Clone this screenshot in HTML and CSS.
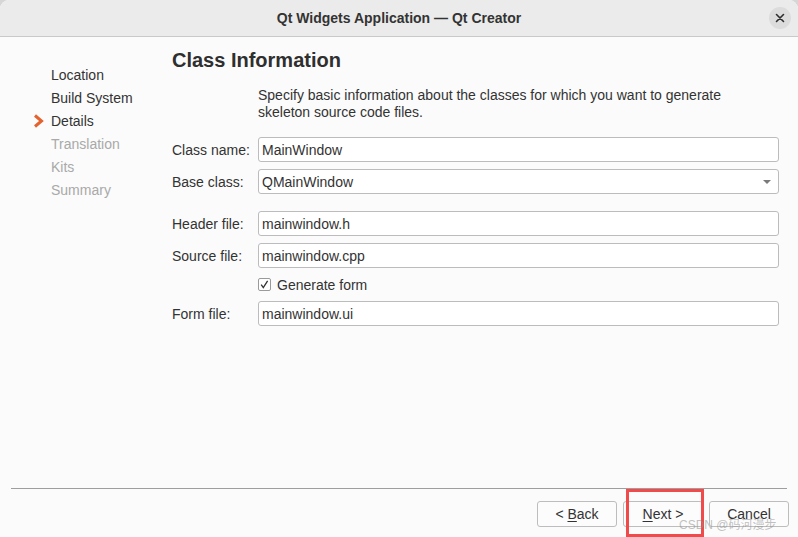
FILE: index.html
```html
<!DOCTYPE html>
<html lang="en">
<head>
    <meta charset="UTF-8">
    <title>Qt Widgets Application — Qt Creator</title>
    <link rel="stylesheet" href="styles.css">
</head>
<body>
    <div class="window">
        <div class="titlebar">
            <span class="title">Qt Widgets Application — Qt Creator</span>
            <div class="close-btn">
                <svg width="10" height="10" viewBox="0 0 10 10">
                    <path d="M1.5 1.5 L8.5 8.5 M8.5 1.5 L1.5 8.5" stroke="#2e2e2e" stroke-width="1.6" stroke-linecap="round"/>
                </svg>
            </div>
        </div>

        <div class="main">
            <div class="sidebar">
                <div class="step">Location</div>
                <div class="step">Build System</div>
                <div class="step current">
                    <svg class="arrow" width="11" height="14" viewBox="0 0 11 14">
                        <path d="M2 1.5 L8.5 7 L2 12.5" fill="none" stroke="#e4622d" stroke-width="3" stroke-linejoin="miter"/>
                    </svg>
                    Details
                </div>
                <div class="step disabled">Translation</div>
                <div class="step disabled">Kits</div>
                <div class="step disabled">Summary</div>
            </div>

            <div class="content">
                <h1 class="page-title">Class Information</h1>
                <p class="description">Specify basic information about the classes for which you want to generate skeleton source code files.</p>

                <div class="form">
                    <div class="row">
                        <label>Class name:</label>
                        <div class="field">MainWindow</div>
                    </div>
                    <div class="row">
                        <label>Base class:</label>
                        <div class="field combo">
                            QMainWindow
                            <span class="combo-arrow"></span>
                        </div>
                    </div>
                    <div class="row spaced">
                        <label>Header file:</label>
                        <div class="field">mainwindow.h</div>
                    </div>
                    <div class="row">
                        <label>Source file:</label>
                        <div class="field">mainwindow.cpp</div>
                    </div>
                    <div class="row check-row">
                        <label></label>
                        <div class="checkbox">
                            <span class="box">
                                <svg width="11" height="11" viewBox="0 0 11 11">
                                    <path d="M2.2 5.6 L4.3 8.6 L8.6 1.8" fill="none" stroke="#333" stroke-width="1.3"/>
                                </svg>
                            </span>
                            Generate form
                        </div>
                    </div>
                    <div class="row">
                        <label>Form file:</label>
                        <div class="field">mainwindow.ui</div>
                    </div>
                </div>
            </div>
        </div>

        <div class="footer">
            <div class="buttons">
                <div class="button"><span>&lt; <u>B</u>ack</span></div>
                <div class="button"><span><u>N</u>ext &gt;</span></div>
                <div class="button"><span>Cancel</span></div>
            </div>
        </div>

        <div class="highlight"></div>
        <div class="watermark">CSDN @码河漫步</div>
    </div>
</body>
</html>
```

FILE: styles.css
```css
* {
    margin: 0;
    padding: 0;
    box-sizing: border-box;
}

body {
    background-color: #d6d6d6;
    font-family: "Liberation Sans", Arial, "Noto Sans CJK SC", sans-serif;
    font-size: 14px;
    color: #333333;
}

.window {
    position: relative;
    width: 798px;
    height: 537px;
    display: flex;
    flex-direction: column;
    background-color: #fbfbfb;
    border-radius: 9px 9px 0 0;
    overflow: hidden;
}

.titlebar {
    height: 37px;
    flex-shrink: 0;
    display: flex;
    align-items: center;
    justify-content: center;
    background-color: #ebebeb;
    border-bottom: 1px solid #c9c9c9;
    position: relative;
}

.title {
    font-weight: bold;
    font-size: 14px;
    color: #333333;
}

.close-btn {
    position: absolute;
    right: 7px;
    top: 7px;
    width: 22px;
    height: 22px;
    border-radius: 50%;
    background-color: #dcdcdc;
    display: flex;
    align-items: center;
    justify-content: center;
}

.main {
    flex: 1;
    display: flex;
}

.sidebar {
    width: 172px;
    flex-shrink: 0;
    padding-top: 26px;
}

.step {
    display: flex;
    align-items: center;
    height: 23px;
    padding-left: 51px;
    color: #333333;
    font-size: 14px;
}

.step.current {
    padding-left: 33px;
}

.step .arrow {
    margin-right: 7px;
}

.step.disabled {
    color: #a9a9a9;
}

.content {
    flex: 1;
    padding: 11px 19px 0 0;
}

.page-title {
    font-size: 20px;
    font-weight: bold;
    line-height: 24px;
    color: #2f2f2f;
}

.description {
    margin: 15px 0 0 86px;
    max-width: 515px;
    line-height: 17px;
    color: #333333;
}

.form {
    margin-top: 16px;
    display: flex;
    flex-direction: column;
    gap: 7px;
}

.row {
    display: flex;
    align-items: center;
}

.row.spaced {
    margin-top: 10px;
}

.row label {
    width: 86px;
    flex-shrink: 0;
}

.field {
    flex: 1;
    height: 25px;
    display: flex;
    align-items: center;
    padding-left: 3px;
    background-color: #ffffff;
    border: 1px solid #bcbcbc;
    border-radius: 3px;
    color: #333333;
}

.combo {
    position: relative;
}

.combo-arrow {
    position: absolute;
    right: 7px;
    top: 10px;
    width: 0;
    height: 0;
    border-left: 4px solid transparent;
    border-right: 4px solid transparent;
    border-top: 4px solid #7a7a7a;
}

.check-row {
    height: 19px;
}

.checkbox {
    display: flex;
    align-items: center;
    gap: 6px;
}

.box {
    width: 13px;
    height: 13px;
    border: 1px solid #9a9a9a;
    border-radius: 2px;
    background-color: #ffffff;
    display: flex;
    align-items: center;
    justify-content: center;
}

.footer {
    height: 49px;
    flex-shrink: 0;
    margin: 0 11px;
    border-top: 1px solid #9e9e9e;
    padding-top: 12px;
}

.buttons {
    display: flex;
    justify-content: flex-end;
    gap: 6px;
    margin-right: -2px;
}

.button {
    width: 80px;
    height: 26px;
    display: flex;
    align-items: center;
    justify-content: center;
    border: 1px solid #bdbdbd;
    border-radius: 3px;
    background-color: #fcfcfc;
    color: #333333;
}

.button u {
    text-decoration-thickness: 1px;
    text-underline-offset: 2px;
}

.highlight {
    position: absolute;
    left: 626px;
    top: 489px;
    width: 78px;
    height: 48px;
    border: 3px solid #f04a4a;
}

.watermark {
    position: absolute;
    left: 679px;
    top: 515px;
    font-size: 12px;
    color: rgba(140, 140, 140, 0.55);
    white-space: nowrap;
}
```
